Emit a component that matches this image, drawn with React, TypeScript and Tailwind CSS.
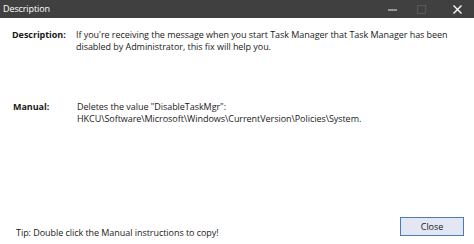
import React from 'react';

const font = { fontFamily: '"Open Sans", "Noto Sans", sans-serif' };

export default function App() {
  return (
    <div className="w-[474px] h-[244px] bg-white flex flex-col overflow-hidden" style={font}>
      {/* Title bar */}
      <div className="h-[18px] bg-[#404040] flex items-center justify-between pl-[3px]">
        <span className="text-[9px] text-white tracking-[-0.1px]">Description</span>
        <div className="flex items-center pr-[12px]">
          <svg width="9" height="9" viewBox="0 0 9 9" className="mr-[20px]">
            <line x1="0" y1="5" x2="9" y2="5" stroke="#e8e8e8" strokeWidth="1" />
          </svg>
          <svg width="9" height="9" viewBox="0 0 9 9" className="mr-[27px]">
            <rect x="0.5" y="0.5" width="8" height="8" fill="none" stroke="#585858" strokeWidth="1" />
          </svg>
          <svg width="9" height="9" viewBox="0 0 9 9">
            <path d="M0.5 0.5 L8.5 8.5 M8.5 0.5 L0.5 8.5" stroke="#ffffff" strokeWidth="1.3" />
          </svg>
        </div>
      </div>

      {/* Body */}
      <div className="flex-1 flex flex-col text-[9px] leading-[12px] tracking-[-0.05px] text-[#1a1a1a]">
        <div className="flex pt-[11px]">
          <div className="w-[76px] pl-[12px] font-bold shrink-0">Description:</div>
          <div className="pr-[20px]">
            If you're receiving the message when you start Task Manager that Task Manager has been disabled by Administrator, this fix will help you.
          </div>
        </div>
        <div className="flex pt-[48px]">
          <div className="w-[77px] pl-[13px] font-bold shrink-0">Manual:</div>
          <div>
            Deletes the value "DisableTaskMgr":
            <br />
            HKCU\Software\Microsoft\Windows\CurrentVersion\Policies\System.
          </div>
        </div>
        <div className="mt-auto flex items-end justify-between pl-[16px] pr-[10px] pb-[5px]">
          <span>Tip: Double click the Manual instructions to copy!</span>
          <button className="w-[64px] h-[19px] bg-[#e3e6f3] border border-[#4b7db3] text-[9px] leading-none text-[#1a1a1a] mb-[3px]">
            Close
          </button>
        </div>
      </div>
    </div>
  );
}
